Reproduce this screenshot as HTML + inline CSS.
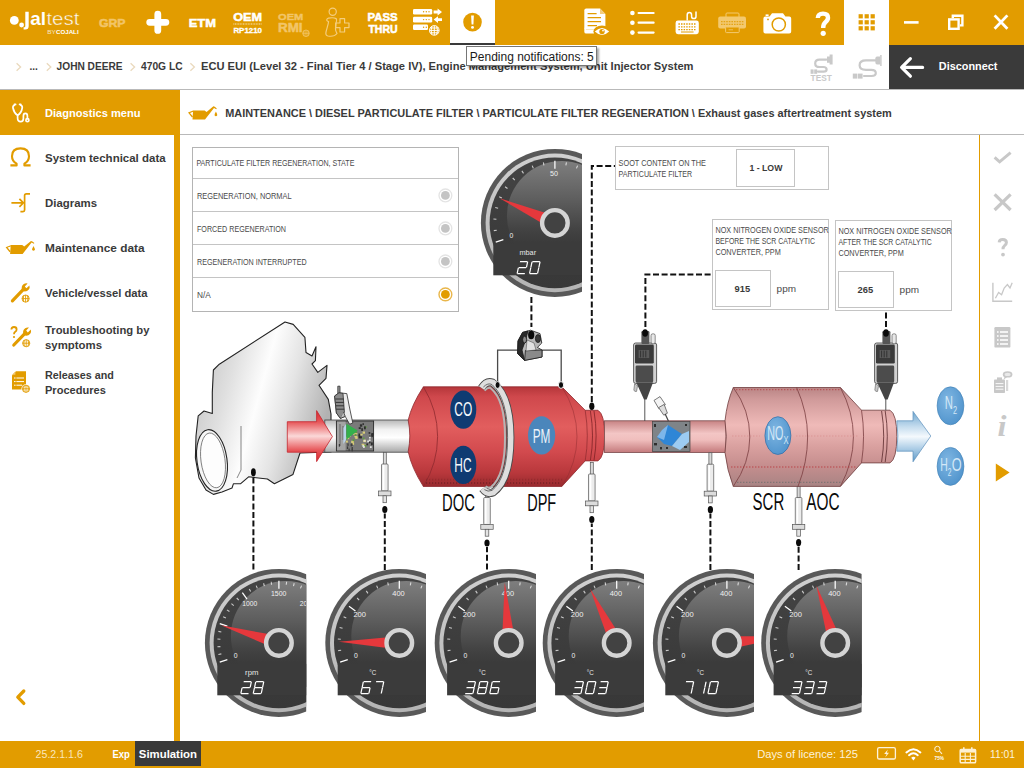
<!DOCTYPE html>
<html>
<head>
<meta charset="utf-8">
<title>Jaltest</title>
<style>
*{box-sizing:border-box;margin:0;padding:0}
html,body{width:1024px;height:768px;overflow:hidden;background:#fff;font-family:"Liberation Sans",sans-serif;color:#3a3a3a}
.abs{position:absolute}
#top{position:absolute;left:0;top:0;width:1024px;height:45px;background:#e29c00}
#crumb{position:absolute;left:0;top:45px;width:1024px;height:44px;background:#fff}
#crumbline{position:absolute;left:0;top:89px;width:1024px;height:1px;background:#b9b9b9}
.bc{position:absolute;top:60px;font-weight:bold;font-size:12px;color:#3a3a3a;white-space:nowrap;line-height:14px;transform-origin:0 50%}
.bcsep{position:absolute;top:61px;width:6px;height:12px}
#disc{position:absolute;left:889px;top:45px;width:135px;height:44px;background:#3a3a3a}
#side{position:absolute;left:0;top:90px;width:174px;height:651px;background:#fff}
#sidebar-o{position:absolute;left:174px;top:90px;width:6px;height:651px;background:#e29c00}
#active{position:absolute;left:0;top:90px;width:180px;height:45px;background:#e29c00}
.mi{position:absolute;left:45px;font-weight:bold;font-size:12px;line-height:15px;color:#3a3a3a;white-space:nowrap;transform-origin:0 50%}
#main{position:absolute;left:180px;top:90px;width:799px;height:651px;background:#fff}
#titleline{position:absolute;left:180px;top:134px;width:844px;height:1px;background:#b9b9b9}
#rline{position:absolute;left:979px;top:135px;width:1px;height:606px;background:#e29c00}
#status{position:absolute;left:0;top:741px;width:1024px;height:27px;background:#e29c00}
.st{position:absolute;top:748px;font-size:12px;line-height:14px;color:#fff;white-space:nowrap;transform-origin:0 50%}
svg{position:absolute;overflow:visible}
</style>
</head>
<body>
<!-- TOP BAR -->
<div id="top"></div>
<div class="abs" style="left:450px;top:0;width:45px;height:45px;background:#fff"></div>
<div class="abs" style="left:450px;top:43px;width:45px;height:2px;background:#3a3a3a"></div>
<div class="abs" style="left:844px;top:0;width:45px;height:45px;background:#fff"></div>
<svg id="topsvg" width="1024" height="45" viewBox="0 0 1024 45" style="left:0;top:0" font-family="Liberation Sans, sans-serif">
<!-- logo -->
<circle cx="14.3" cy="20.4" r="4.4" fill="#fff"/>
<circle cx="21.6" cy="25" r="2.4" fill="#fff"/>
<path d="M25.3 11.8H28.7V26Q28.7 29.6 25.2 29.6H23.6V27.2H24.4Q25.3 27.2 25.3 26Z" fill="#fff"/>
<text x="30.2" y="25.3" font-size="18.4" font-weight="bold" fill="#fff" textLength="15.8" lengthAdjust="spacingAndGlyphs">al</text>
<text x="46.4" y="25.3" font-size="18.4" fill="#fff" textLength="33.2" lengthAdjust="spacingAndGlyphs" stroke="#e29c00" stroke-width="0.45">test</text>
<text x="47.2" y="33.6" font-size="5.6" fill="#fff" opacity="0.75" textLength="8.5" lengthAdjust="spacingAndGlyphs">BY</text>
<text x="56" y="33.6" font-size="5.6" font-weight="bold" fill="#fff" textLength="22.6" lengthAdjust="spacingAndGlyphs">COJALI</text>
<!-- GRP -->
<text x="99" y="26.5" font-size="11.3" font-weight="bold" fill="#f2c568" stroke="#f2c568" stroke-width="0.5" textLength="26.5" lengthAdjust="spacingAndGlyphs">GRP</text>
<!-- plus -->
<path d="M149.7 22.3H165.9M157.8 14.2V30.4" stroke="#fff" stroke-width="6.8" stroke-linecap="round" fill="none"/>
<!-- ETM -->
<text x="188.7" y="26.7" font-size="11.6" font-weight="bold" fill="#fff" stroke="#fff" stroke-width="0.5" textLength="27.3" lengthAdjust="spacingAndGlyphs">ETM</text>
<!-- OEM RP1210 -->
<text x="233.2" y="21.3" font-size="11.6" font-weight="bold" fill="#fff" stroke="#fff" stroke-width="0.5" textLength="28.8" lengthAdjust="spacingAndGlyphs">OEM</text>
<path d="M233.4 24H262" stroke="#fff" stroke-width="1" stroke-dasharray="1 0.6" opacity="0.75"/>
<text x="233.4" y="32.8" font-size="7.8" font-weight="bold" fill="#fff" stroke="#fff" stroke-width="0.3" textLength="28.6" lengthAdjust="spacingAndGlyphs">RP1210</text>
<!-- OEM RMI faded -->
<text x="278" y="19.9" font-size="9.8" font-weight="bold" fill="#f2c568" stroke="#f2c568" stroke-width="0.4" textLength="25.3" lengthAdjust="spacingAndGlyphs">OEM</text>
<text x="278" y="32.2" font-size="12.6" font-weight="bold" fill="#f2c568" stroke="#f2c568" stroke-width="0.5" textLength="24.6" lengthAdjust="spacingAndGlyphs">RMI</text>
<g stroke="#f2c568" stroke-width="0.8" fill="none"><circle cx="306" cy="33.3" r="3.3"/><path d="M302.7 33.3H309.3M306 30V36.6M304.2 30.6Q303.2 33.3 304.2 36M307.8 30.6Q308.8 33.3 307.8 36"/></g>
<!-- person plus faded -->
<g stroke="#f4cd7d" stroke-width="1.2" fill="none" stroke-linejoin="round">
<circle cx="332.7" cy="11.8" r="3.6"/>
<path d="M328.5 18.2C331 17.6 334.5 17.8 336.2 18.6C337 20 336.6 21.5 336.2 22.5L335.5 28.5C335.3 31 336.5 32 337 33.5C335 36 331.5 36.6 328 36C326.2 35.6 325.6 33.8 326 32C326.8 28.5 328.3 24.5 328.6 21.5C327.4 21.5 326.6 20.6 326.8 19.6C327 18.8 327.6 18.4 328.5 18.2Z"/>
<path d="M340 18.6H344.6V23H349V27.6H344.6V32H340V27.6H335.6V23H340Z"/>
</g>
<!-- PASS THRU -->
<text x="367.4" y="21" font-size="10.8" font-weight="bold" fill="#fff" stroke="#fff" stroke-width="0.5" textLength="30.2" lengthAdjust="spacingAndGlyphs">PASS</text>
<text x="368.4" y="32.5" font-size="10.8" font-weight="bold" fill="#fff" stroke="#fff" stroke-width="0.5" textLength="29.2" lengthAdjust="spacingAndGlyphs">THRU</text>
<!-- server -->
<g fill="#fff">
<rect x="413" y="9" width="19.2" height="5.5" rx="1.2"/>
<rect x="413" y="16.8" width="19.2" height="5.7" rx="1.2"/>
<rect x="413" y="24.4" width="15" height="5.5" rx="1.2"/>
<path d="M433.6 10.6H437.6V8.6L442 12L437.6 15.4V13.4H433.6Z"/>
<path d="M442 18.2H438V16.2L433.6 19.6L438 23V21H442Z"/>
</g>
<g fill="#e29c00"><circle cx="423.6" cy="11.8" r="0.7"/><circle cx="426.3" cy="11.8" r="0.7"/><circle cx="429" cy="11.8" r="0.7"/><circle cx="423.6" cy="19.6" r="0.7"/><circle cx="426.3" cy="19.6" r="0.7"/><circle cx="429" cy="19.6" r="0.7"/><circle cx="423.6" cy="27.2" r="0.7"/><circle cx="426.3" cy="27.2" r="0.7"/></g>
<circle cx="434.3" cy="30.4" r="6.2" fill="#e29c00"/>
<g stroke="#fff" stroke-width="1" fill="none"><circle cx="434.3" cy="30.4" r="4.8"/><path d="M429.5 30.4H439.1M434.3 25.6V35.2M432 26.3Q430.2 30.4 432 34.5M436.6 26.3Q438.4 30.4 436.6 34.5M430.2 28H438.4M430.2 32.8H438.4"/></g>
<!-- notification -->
<circle cx="472.5" cy="22.1" r="9.3" fill="#e29c00"/>
<path d="M471.1 15.6H473.9L473.4 24.4H471.6Z" fill="#fff"/><circle cx="472.5" cy="27.4" r="1.45" fill="#fff"/>
<!-- doc-eye -->
<path d="M586.2 8.6H600L605.4 14V29.5H586.2Q584.3 29.5 584.3 27.6V10.5Q584.3 8.6 586.2 8.6Z" fill="#fff"/>
<path d="M600 8.6V14H605.4Z" fill="#f4cd7d"/>
<path d="M587.6 13.6H596.6M587.6 17.6H601M587.6 21.6H601M587.6 25.6H597" stroke="#e29c00" stroke-width="1.3"/>
<path d="M586.2 29.5H597L599 33.6H586.2Q584.3 33.6 584.3 31.7V27.6Z" fill="#fff"/>
<ellipse cx="602" cy="31.6" rx="8.6" ry="6" fill="#e29c00"/>
<path d="M594.8 31.6Q602 24.6 609.2 31.6Q602 38.6 594.8 31.6Z" fill="#fff"/>
<circle cx="602" cy="31.6" r="2.7" fill="#e29c00"/><circle cx="603" cy="30.6" r="0.9" fill="#fff"/>
<!-- list -->
<g fill="#fff"><circle cx="632.4" cy="13" r="2.3"/><circle cx="632.4" cy="22.7" r="2.3"/><circle cx="632.4" cy="32.6" r="2.3"/></g>
<path d="M638.6 13H653.6M638.6 22.7H653.6M638.6 32.6H653.6" stroke="#fff" stroke-width="2.2" stroke-linecap="round"/>
<!-- keyboard -->
<rect x="675.6" y="20.6" width="23.2" height="13.6" rx="2.4" fill="#fff"/>
<path d="M687.2 20.6V15Q687.2 12.6 689.4 12.6Q691.6 12.6 691.6 15V16.4Q691.6 18.6 693.8 18.6Q696 18.6 696 16.4V11.6" stroke="#fff" stroke-width="1.5" fill="none"/>
<g stroke="#e29c00" stroke-width="1.3" stroke-dasharray="1.5 1.1"><path d="M678.4 24H696.4M678.4 26.8H696.4M678.4 29.6H696.4"/></g>
<path d="M681 32H693.6" stroke="#e29c00" stroke-width="1"/>
<!-- printer faded -->
<g fill="#f3c96f">
<rect x="726" y="13" width="13" height="5" rx="1" fill="none" stroke="#f3c96f" stroke-width="1"/>
<rect x="718.2" y="16.6" width="27.8" height="12" rx="2"/>
<rect x="725.6" y="27" width="13.6" height="5.6" rx="0.8" fill="#e29c00" stroke="#f3c96f" stroke-width="1"/>
</g>
<path d="M721 21.6H743.4M721 24.4H743.4" stroke="#e29c00" stroke-width="1.1" stroke-dasharray="1.6 1" opacity="0.8"/>
<path d="M728.6 29.8H733" stroke="#f3c96f" stroke-width="0.8"/>
<!-- camera -->
<path d="M765.4 16.4H769.6L772 13.2H783L785.4 16.4H789.2Q791.2 16.4 791.2 18.4V31.4Q791.2 33.4 789.2 33.4H765.4Q763.4 33.4 763.4 31.4V18.4Q763.4 16.4 765.4 16.4Z" fill="#fff"/>
<circle cx="778.8" cy="24.5" r="6.6" fill="none" stroke="#e29c00" stroke-width="1.5"/>
<circle cx="768" cy="19.4" r="0.9" fill="#e29c00"/>
<path d="M765.6 14.4H768.6V16H765.6Z" fill="#fff"/>
<!-- question -->
<path d="M817.8 18Q818 13.6 823 13.6Q828 13.6 828 17.8Q828 20.2 825.4 22.2Q823.2 24 823.2 28" stroke="#fff" stroke-width="4.4" fill="none"/>
<circle cx="823.2" cy="33.3" r="2.6" fill="#fff"/>
<!-- grid -->
<g fill="#e29c00">
<rect x="858.6" y="14.2" width="4.2" height="4.2"/><rect x="864.6" y="14.2" width="4.2" height="4.2"/><rect x="870.6" y="14.2" width="4.2" height="4.2"/>
<rect x="858.6" y="20.2" width="4.2" height="4.2"/><rect x="864.6" y="20.2" width="4.2" height="4.2"/><rect x="870.6" y="20.2" width="4.2" height="4.2"/>
<rect x="858.6" y="26.2" width="4.2" height="4.2"/><rect x="864.6" y="26.2" width="4.2" height="4.2"/><rect x="870.6" y="26.2" width="4.2" height="4.2"/>
</g>
<!-- window controls -->
<path d="M904 22.4H918.6" stroke="#fff" stroke-width="2.6"/>
<rect x="949.2" y="19.4" width="9.4" height="9.4" fill="none" stroke="#fff" stroke-width="2.4"/>
<path d="M952.8 18.2V15.8H962.4V25.4H960" fill="none" stroke="#fff" stroke-width="2.4"/>
<path d="M994.6 15.4L1007.4 28.8M1007.4 15.4L994.6 28.8" stroke="#fff" stroke-width="2.8"/>
</svg>
<!-- BREADCRUMB -->
<div id="crumb"></div>
<div id="crumbline"></div>
<div id="disc"></div>
<svg width="1024" height="45" viewBox="0 45 1024 45" style="left:0;top:45px" font-family="Liberation Sans, sans-serif">
<g stroke="#ead9bd" stroke-width="1.3" fill="none"><path d="M16.6 63.2L20.6 67L16.6 70.8"/><path d="M46.8 63.2L50.8 67L46.8 70.8"/><path d="M130.6 63.2L134.6 67L130.6 70.8"/><path d="M190.4 63.2L194.4 67L190.4 70.8"/></g>
<text x="29.4" y="70.3" font-size="10.3" font-weight="bold" fill="#3a3a3a" textLength="8.4" lengthAdjust="spacingAndGlyphs" >...</text><text x="56.6" y="70.3" font-size="10.3" font-weight="bold" fill="#3a3a3a" textLength="66" lengthAdjust="spacingAndGlyphs" >JOHN DEERE</text><text x="141" y="70.3" font-size="10.3" font-weight="bold" fill="#3a3a3a" textLength="41.6" lengthAdjust="spacingAndGlyphs" >470G LC</text><text x="201" y="70.3" font-size="10.3" font-weight="bold" fill="#3a3a3a" textLength="492.5" lengthAdjust="spacingAndGlyphs" >ECU EUI (Level 32 - Final Tier 4 / Stage IV), Engine Management System, Unit Injector System</text>
<!-- TEST cable -->
<g stroke="#c9c9c9" fill="none" stroke-width="2.2" stroke-linecap="round">
<path d="M826.4 59.6H819.5Q815.2 59.6 815.2 63.4Q815.2 67 819.5 67H823.2Q826.6 67 826.6 69.5Q826.6 71.6 823.6 71.6H818"/>
<path d="M876.6 60.4H866Q859.6 60.4 859.6 65.2Q859.6 69.8 866 69.8H871.2Q875.8 69.8 875.8 73Q875.8 76 871.6 76H864"/>
</g>
<g fill="#c9c9c9">
<path d="M827 56.4H829.6V54.6H832.6V64.6H829.6V62.8H827Z"/>
<rect x="810.6" y="69.4" width="3" height="4.4"/><rect x="814.2" y="69.4" width="3" height="4.4"/>
<path d="M877 56.6H880.2V64.4H877Q875.4 64.4 875.4 62.8V58.2Q875.4 56.6 877 56.6Z"/><rect x="880.2" y="55" width="1.4" height="11"/>
<rect x="852.8" y="73.6" width="4.6" height="5"/><rect x="858" y="73.6" width="4.6" height="5"/>
</g>
<text x="810.6" y="80.8" font-size="8.6" font-weight="bold" fill="#c9c9c9" textLength="21.2" lengthAdjust="spacingAndGlyphs" >TEST</text>
<!-- disconnect -->
<path d="M902 67.4H922.6M910.4 58.6L901.6 67.4L910.4 76.2" stroke="#fff" stroke-width="3.2" fill="none" stroke-linecap="round" stroke-linejoin="round"/>
<text x="938.8" y="70.3" font-size="10.4" font-weight="bold" fill="#fff" textLength="58.6" lengthAdjust="spacingAndGlyphs" >Disconnect</text>
</svg>
<!-- tooltip -->
<div class="abs" style="left:466px;top:46px;width:131px;height:20px;background:#fff;border:1px solid #767676;box-shadow:2px 2px 2px rgba(0,0,0,0.35)"></div>
<svg width="140" height="24" viewBox="466 46 140 24" style="left:466px;top:46px" font-family="Liberation Sans, sans-serif"><text x="469.8" y="60.6" font-size="12" font-weight="normal" fill="#1a1a1a" textLength="124" lengthAdjust="spacingAndGlyphs" >Pending notifications: 5</text></svg>
<!-- SIDEBAR -->
<div id="side"></div>
<div id="sidebar-o"></div>
<div id="active"></div>
<svg width="180" height="651" viewBox="0 90 180 651" style="left:0;top:90px" font-family="Liberation Sans, sans-serif">
<text x="45" y="117" font-size="11.2" font-weight="bold" fill="#fff" textLength="95.6" lengthAdjust="spacingAndGlyphs" >Diagnostics menu</text><text x="45" y="162" font-size="11.2" font-weight="bold" fill="#3a3a3a" textLength="120.6" lengthAdjust="spacingAndGlyphs" >System technical data</text><text x="45" y="207" font-size="11.2" font-weight="bold" fill="#3a3a3a" textLength="52" lengthAdjust="spacingAndGlyphs" >Diagrams</text><text x="45" y="252" font-size="11.2" font-weight="bold" fill="#3a3a3a" textLength="99.6" lengthAdjust="spacingAndGlyphs" >Maintenance data</text><text x="45" y="297" font-size="11.2" font-weight="bold" fill="#3a3a3a" textLength="102.6" lengthAdjust="spacingAndGlyphs" >Vehicle/vessel data</text><text x="45" y="334.4" font-size="11.2" font-weight="bold" fill="#3a3a3a" textLength="104.4" lengthAdjust="spacingAndGlyphs" >Troubleshooting by</text><text x="45" y="349" font-size="11.2" font-weight="bold" fill="#3a3a3a" textLength="57" lengthAdjust="spacingAndGlyphs" >symptoms</text><text x="45" y="379" font-size="11.2" font-weight="bold" fill="#3a3a3a" textLength="68.8" lengthAdjust="spacingAndGlyphs" >Releases and</text><text x="45" y="394" font-size="11.2" font-weight="bold" fill="#3a3a3a" textLength="60.8" lengthAdjust="spacingAndGlyphs" >Procedures</text>
<!-- stethoscope -->
<g stroke="#fff" stroke-width="1.7" fill="none" stroke-linecap="round">
<path d="M14.4 105.2Q12.6 105.8 13 108Q14 113 17.6 115.4Q21.4 113 22.2 108Q22.6 105.8 20.8 105.2"/>
<path d="M17.6 115.4V118Q17.6 121.6 20.6 121.6Q23.4 121.6 23.4 118.4V116Q23.4 113.4 25.4 113.4Q27.4 113.4 27.4 116V118.6"/>
<circle cx="27.4" cy="120.2" r="1.5"/><path d="M15.6 104.4H14.4M19.6 104.4H20.8"/>
</g>
<!-- omega -->
<path d="M10.4 165.4H16.6V163.6Q12 161.2 12 156.2Q12 148.4 20.5 148.4Q29 148.4 29 156.2Q29 161.2 24.4 163.6V165.4H30.6" stroke="#e29c00" stroke-width="2.1" fill="none" stroke-linejoin="round"/>
<!-- diagrams -->
<g stroke="#e29c00" stroke-width="1.7" fill="none"><path d="M11.4 202.8H23M19.4 198.8L23.4 202.8L19.4 206.8"/><path d="M30 193.8H26.4Q24.6 193.8 24.6 195.6V210Q24.6 211.6 23 211.6H20.4"/></g>
<!-- oil can -->
<g id="oil" fill="#e29c00"><path d="M10.7 245H22.2L24.2 246.6L31 240.9L32.4 241.4L34.4 243L33.8 243.8L31.6 242.6L22.6 254H10.1Z"/><path d="M10.8 245.2L5.6 247.2L9.6 252.2L10.6 251.2L7.6 247.6L10.8 246.4Z"/><path d="M33.5 246Q35.2 249 34.8 250Q33.5 251.6 32.2 250Q31.8 249 33.5 246Z"/></g>
<!-- wrench -->
<g id="wr"><path d="M12.4 300.8L23.6 289.2" stroke="#e29c00" stroke-width="3.2" stroke-linecap="round"/><path d="M22.2 290.4Q20.6 286.4 23.8 284Q25.6 282.8 27.6 283.4L24.8 286.4L26.4 288.2L29.4 285.4Q30.2 287.6 28.8 289.6Q26.4 292.4 22.6 291Z" fill="#e29c00"/></g>
<g id="gl"><circle cx="25.6" cy="298.6" r="4.6" fill="#fff"/><g stroke="#e29c00" stroke-width="0.9" fill="none"><circle cx="25.6" cy="298.6" r="3.6"/><path d="M22 298.6H29.2M25.6 295V302.2M23.8 295.6Q22.6 298.6 23.8 301.6M27.4 295.6Q28.6 298.6 27.4 301.6"/></g></g>
<!-- ? wrench -->
<use href="#wr" transform="translate(1.4 44.2)"/>
<use href="#gl" transform="translate(0.6 44.6)"/>
<path d="M11.4 329.6Q11.4 327 14 327Q16.6 327 16.6 329.4Q16.6 330.8 15.2 331.8Q14 332.6 14 334.2" stroke="#e29c00" stroke-width="1.8" fill="none"/><circle cx="14" cy="337" r="1.1" fill="#e29c00"/>
<!-- doc globe -->
<path d="M16 371.2H26V389.6H12V375.2Z" fill="#e29c00"/><path d="M15.4 371.6V374.8H12.2Z" fill="#f0c773"/>
<path d="M14 378H24M14 381.6H24M14 385.2H22" stroke="#fff" stroke-width="1" stroke-dasharray="1.6 0.8 20"/>
<use href="#gl" transform="translate(0.4 90.2)"/>
<!-- collapse chevron -->
<path d="M23.8 691L17.8 697.2L23.8 703.4" stroke="#e29c00" stroke-width="3.3" fill="none" stroke-linecap="round" stroke-linejoin="round"/>
</svg>
<!-- MAIN -->
<div id="main"></div>
<div id="titleline"></div>
<div id="rline"></div>
<!--DIAGRAM-START-->
<svg id="diagram" width="1024" height="768" viewBox="0 0 1024 768" style="left:0;top:0" font-family="Liberation Sans, sans-serif">
<defs>
<linearGradient id="gEng" x1="0" y1="0.1" x2="1" y2="0.45"><stop offset="0" stop-color="#bfbfbf"/><stop offset="0.3" stop-color="#e0e0e0"/><stop offset="0.52" stop-color="#fdfdfd"/><stop offset="0.72" stop-color="#e4e4e4"/><stop offset="1" stop-color="#b2b2b2"/></linearGradient>
<linearGradient id="gRedArrow" x1="0" y1="0" x2="0" y2="1"><stop offset="0" stop-color="#d9262e"/><stop offset="0.22" stop-color="#e75558"/><stop offset="0.5" stop-color="#fbd8d8"/><stop offset="0.78" stop-color="#e75558"/><stop offset="1" stop-color="#d9262e"/></linearGradient>
<linearGradient id="gPipe1" x1="0" y1="0" x2="0" y2="1"><stop offset="0" stop-color="#b8b8b8"/><stop offset="0.3" stop-color="#f2f2f2"/><stop offset="0.55" stop-color="#ffffff"/><stop offset="1" stop-color="#a8a8a8"/></linearGradient>
<linearGradient id="gRed" x1="0" y1="0" x2="0" y2="1"><stop offset="0" stop-color="#b5363a"/><stop offset="0.1" stop-color="#cf484c"/><stop offset="0.4" stop-color="#e25e5e"/><stop offset="0.65" stop-color="#d24a4e"/><stop offset="0.86" stop-color="#b9383c"/><stop offset="1" stop-color="#982a2e"/></linearGradient>
<linearGradient id="gPink" x1="0" y1="0" x2="0" y2="1"><stop offset="0" stop-color="#b98585"/><stop offset="0.12" stop-color="#d09a9a"/><stop offset="0.38" stop-color="#efbab8"/><stop offset="0.6" stop-color="#d9a09f"/><stop offset="0.8" stop-color="#c48d8d"/><stop offset="1" stop-color="#a88484"/></linearGradient>
<linearGradient id="gPipe2" x1="0" y1="0" x2="0" y2="1"><stop offset="0" stop-color="#c88384"/><stop offset="0.4" stop-color="#f3c6c5"/><stop offset="0.6" stop-color="#f0bebd"/><stop offset="1" stop-color="#c47a7c"/></linearGradient>
<linearGradient id="gBlueArrow" x1="0" y1="0" x2="0" y2="1"><stop offset="0" stop-color="#6ea6cf"/><stop offset="0.3" stop-color="#c4dcee"/><stop offset="0.5" stop-color="#f4f9fd"/><stop offset="0.75" stop-color="#a9cbe5"/><stop offset="1" stop-color="#5f9ac8"/></linearGradient>
<linearGradient id="gFace" x1="0" y1="0" x2="0" y2="1"><stop offset="0" stop-color="#444444"/><stop offset="0.6" stop-color="#3b3b3b"/><stop offset="1" stop-color="#383838"/></linearGradient>
<linearGradient id="gGlass" x1="0" y1="0" x2="0" y2="1"><stop offset="0" stop-color="#7e7e7e"/><stop offset="0.35" stop-color="#5e5e5e"/><stop offset="0.62" stop-color="#434343"/><stop offset="0.74" stop-color="#3b3b3b"/><stop offset="1" stop-color="#3b3b3b"/></linearGradient>
<linearGradient id="gRing" x1="0" y1="0" x2="0" y2="1"><stop offset="0" stop-color="#d0d0d0"/><stop offset="1" stop-color="#b4b4b4"/></linearGradient>
<radialGradient id="gBall" cx="0.4" cy="0.35" r="0.7"><stop offset="0" stop-color="#7fb6e2"/><stop offset="1" stop-color="#4f93cc"/></radialGradient>

<g id="gbase">
<circle r="74" fill="#595959"/>
<circle r="69.3" fill="url(#gRing)"/>
<circle r="65.3" fill="url(#gFace)"/>
<circle cx="7" cy="-7" r="55" fill="url(#gGlass)"/>
<rect x="-61.6" y="21" width="140" height="31.4" fill="#3b3b3b"/>
</g>
<g id="ghub"><circle r="12.8" fill="#424242" stroke="#d4d4d4" stroke-width="4.4"/></g>
<path id="needle" d="M60.5 0L14 -5.2L14 5.2Z" fill="#e5383c"/>

<g id="tkT" stroke="#fff" stroke-linecap="butt"><path d="M-51.55 16.75L-59.16 19.22" stroke-width="1.25" opacity="1"/><path d="M-58.14 7.34L-61.11 7.72" stroke-width="1.1" opacity="0.72"/><path d="M-58.48 -3.68L-61.48 -3.87" stroke-width="1.1" opacity="0.72"/><path d="M-56.76 -14.57L-59.66 -15.32" stroke-width="1.1" opacity="0.72"/><path d="M-53.02 -24.95L-55.74 -26.23" stroke-width="1.1" opacity="0.72"/><path d="M-43.85 -31.86L-50.32 -36.56" stroke-width="1.25" opacity="1"/><path d="M-40.11 -42.72L-42.17 -44.90" stroke-width="1.1" opacity="0.72"/><path d="M-31.40 -49.48L-33.01 -52.01" stroke-width="1.1" opacity="0.72"/><path d="M-21.57 -54.48L-22.68 -57.27" stroke-width="1.1" opacity="0.72"/><path d="M-10.98 -57.56L-11.54 -60.51" stroke-width="1.1" opacity="0.72"/><path d="M-0.00 -54.20L-0.00 -62.20" stroke-width="1.25" opacity="1"/><path d="M10.98 -57.56L11.54 -60.51" stroke-width="1.1" opacity="0.72"/><path d="M21.57 -54.48L22.68 -57.27" stroke-width="1.1" opacity="0.72"/><path d="M31.40 -49.48L33.01 -52.01" stroke-width="1.1" opacity="0.72"/><path d="M40.11 -42.72L42.17 -44.90" stroke-width="1.1" opacity="0.72"/><path d="M43.85 -31.86L50.32 -36.56" stroke-width="1.25" opacity="1"/><path d="M53.02 -24.95L55.74 -26.23" stroke-width="1.1" opacity="0.72"/></g>
<g id="tkR" stroke="#fff" stroke-linecap="butt"><path d="M-51.55 16.75L-59.16 19.22" stroke-width="1.25" opacity="1"/><path d="M-57.56 10.98L-60.51 11.54" stroke-width="1.1" opacity="0.72"/><path d="M-58.48 3.68L-61.48 3.87" stroke-width="1.1" opacity="0.72"/><path d="M-58.48 -3.68L-61.48 -3.87" stroke-width="1.1" opacity="0.72"/><path d="M-57.56 -10.98L-60.51 -11.54" stroke-width="1.1" opacity="0.72"/><path d="M-51.55 -16.75L-59.16 -19.22" stroke-width="1.25" opacity="1"/><path d="M-53.02 -24.95L-55.74 -26.23" stroke-width="1.1" opacity="0.72"/><path d="M-49.48 -31.40L-52.01 -33.01" stroke-width="1.1" opacity="0.72"/><path d="M-45.15 -37.35L-47.46 -39.27" stroke-width="1.1" opacity="0.72"/><path d="M-40.11 -42.72L-42.17 -44.90" stroke-width="1.1" opacity="0.72"/><path d="M-31.86 -43.85L-36.56 -50.32" stroke-width="1.25" opacity="1"/><path d="M-28.23 -51.35L-29.68 -53.98" stroke-width="1.1" opacity="0.72"/><path d="M-21.57 -54.48L-22.68 -57.27" stroke-width="1.1" opacity="0.72"/><path d="M-14.57 -56.76L-15.32 -59.66" stroke-width="1.1" opacity="0.72"/><path d="M-7.34 -58.14L-7.72 -61.11" stroke-width="1.1" opacity="0.72"/><path d="M-0.00 -54.20L-0.00 -62.20" stroke-width="1.25" opacity="1"/><path d="M7.34 -58.14L7.72 -61.11" stroke-width="1.1" opacity="0.72"/><path d="M14.57 -56.76L15.32 -59.66" stroke-width="1.1" opacity="0.72"/><path d="M21.57 -54.48L22.68 -57.27" stroke-width="1.1" opacity="0.72"/><path d="M28.23 -51.35L29.68 -53.98" stroke-width="1.1" opacity="0.72"/><path d="M31.86 -43.85L36.56 -50.32" stroke-width="1.25" opacity="1"/><path d="M40.11 -42.72L42.17 -44.90" stroke-width="1.1" opacity="0.72"/><path d="M45.15 -37.35L47.46 -39.27" stroke-width="1.1" opacity="0.72"/></g>
<g id="tkM" stroke="#fff" stroke-linecap="butt"><path d="M-51.55 16.75L-59.16 19.22" stroke-width="1.25" opacity="1"/><path d="M-58.14 7.34L-61.11 7.72" stroke-width="1.1" opacity="0.72"/><path d="M-58.48 -3.68L-61.48 -3.87" stroke-width="1.1" opacity="0.72"/><path d="M-56.76 -14.57L-59.66 -15.32" stroke-width="1.1" opacity="0.72"/><path d="M-53.02 -24.95L-55.74 -26.23" stroke-width="1.1" opacity="0.72"/><path d="M-47.41 -34.44L-49.84 -36.21" stroke-width="1.1" opacity="0.72"/><path d="M-40.11 -42.72L-42.17 -44.90" stroke-width="1.1" opacity="0.72"/><path d="M-31.40 -49.48L-33.01 -52.01" stroke-width="1.1" opacity="0.72"/><path d="M-21.57 -54.48L-22.68 -57.27" stroke-width="1.1" opacity="0.72"/><path d="M-10.98 -57.56L-11.54 -60.51" stroke-width="1.1" opacity="0.72"/><path d="M-0.00 -54.20L-0.00 -62.20" stroke-width="1.25" opacity="1"/><path d="M10.98 -57.56L11.54 -60.51" stroke-width="1.1" opacity="0.72"/><path d="M21.57 -54.48L22.68 -57.27" stroke-width="1.1" opacity="0.72"/><path d="M31.40 -49.48L33.01 -52.01" stroke-width="1.1" opacity="0.72"/><path d="M40.11 -42.72L42.17 -44.90" stroke-width="1.1" opacity="0.72"/><path d="M47.41 -34.44L49.84 -36.21" stroke-width="1.1" opacity="0.72"/><path d="M53.02 -24.95L55.74 -26.23" stroke-width="1.1" opacity="0.72"/></g>
<path id="d0" d="M0.9 0.0L7.1 0.0M8.0 0.9L8.0 5.4M8.0 6.8L8.0 11.3M0.9 12.2L7.1 12.2M0.0 6.8L0.0 11.3M0.0 0.9L0.0 5.4"/>
<path id="d1" d="M8.0 0.9L8.0 5.4M8.0 6.8L8.0 11.3"/>
<path id="d2" d="M0.9 0.0L7.1 0.0M8.0 0.9L8.0 5.4M0.9 6.1L7.1 6.1M0.0 6.8L0.0 11.3M0.9 12.2L7.1 12.2"/>
<path id="d3" d="M0.9 0.0L7.1 0.0M8.0 0.9L8.0 5.4M0.9 6.1L7.1 6.1M8.0 6.8L8.0 11.3M0.9 12.2L7.1 12.2"/>
<path id="d4" d="M0.0 0.9L0.0 5.4M0.9 6.1L7.1 6.1M8.0 0.9L8.0 5.4M8.0 6.8L8.0 11.3"/>
<path id="d5" d="M0.9 0.0L7.1 0.0M0.0 0.9L0.0 5.4M0.9 6.1L7.1 6.1M8.0 6.8L8.0 11.3M0.9 12.2L7.1 12.2"/>
<path id="d6" d="M0.9 0.0L7.1 0.0M0.0 0.9L0.0 5.4M0.9 6.1L7.1 6.1M0.0 6.8L0.0 11.3M0.9 12.2L7.1 12.2M8.0 6.8L8.0 11.3"/>
<path id="d7" d="M0.9 0.0L7.1 0.0M8.0 0.9L8.0 5.4M8.0 6.8L8.0 11.3"/>
<path id="d8" d="M0.9 0.0L7.1 0.0M8.0 0.9L8.0 5.4M8.0 6.8L8.0 11.3M0.9 12.2L7.1 12.2M0.0 6.8L0.0 11.3M0.0 0.9L0.0 5.4M0.9 6.1L7.1 6.1"/>
<path id="d9" d="M0.9 0.0L7.1 0.0M8.0 0.9L8.0 5.4M8.0 6.8L8.0 11.3M0.9 12.2L7.1 12.2M0.0 0.9L0.0 5.4M0.9 6.1L7.1 6.1"/>
<g id="probe" stroke="#555" stroke-width="0.7" fill="#ececec">
<rect x="-1.5" y="0" width="3" height="12" fill="#d8d8d8"/>
<rect x="-3.3" y="11.5" width="6.6" height="27" rx="1"/>
<path d="M-1.2 12.5V37.5" stroke="#fff" stroke-width="1.6" fill="none"/>
<rect x="-6.2" y="38.5" width="12.4" height="4.8" fill="#dcdcdc"/>
<rect x="-1.8" y="43.3" width="3.6" height="6.9" fill="#e4e4e4"/>
</g>
</defs>
<!-- ENGINE -->
<g stroke="#222" stroke-width="1.1" stroke-linejoin="round">
<path d="M285 322L293.2 324.4L304.9 337.3L306 352.5L312 356L316 346.7L315.4 360.7L312 364L317.8 372.4L327 365.4L326 378.3L319 385.3L328.3 399.4L331 414L331 452L300 453L293 474.4L274.4 483.8L267.4 479L248.6 476.8L240.4 483.8L233.4 483.8L232 488L222 492L213.4 494.4L206 490L199 478L195.4 458L196 436L198.2 415.8L204 411L212.3 413.5L212.3 392.4L213.4 370L219.3 364.2Z" fill="url(#gEng)"/>
<ellipse cx="212" cy="460.4" rx="15" ry="31" fill="#f6f6f6" transform="rotate(-8 212 460.4)"/>
<ellipse cx="213" cy="460.4" rx="12" ry="27.6" fill="#fdfdfd" stroke="#555" stroke-width="0.7" transform="rotate(-8 213 460.4)"/>
<path d="M241 426V470L237 478" fill="none" stroke="#555" stroke-width="0.7"/>
</g>
<!-- probes behind bodies -->
<use href="#probe" transform="translate(487 486)"/>
<use href="#probe" transform="translate(591.8 462.5)"/>
<use href="#probe" transform="translate(798.6 486)"/>
<!-- PIPE 1 -->
<rect x="324.8" y="420" width="88" height="32.2" fill="url(#gPipe1)" stroke="#444" stroke-width="0.8"/>
<!-- mixer 1 -->
<rect x="336.4" y="421" width="37.2" height="30" fill="#7a7a7a" stroke="#2a2a2a" stroke-width="0.9"/>
<rect x="337" y="421.6" width="8.6" height="28.8" fill="#a4a4a4"/>
<path d="M340 424V446M343 426V440" stroke="#555" stroke-width="0.8"/>
<path d="M343.4 428L346 424V440L343.4 444Z" fill="#b9d4ea"/>
<rect x="349.7" y="431.8" width="2.2" height="1.6" fill="#d8cd78"/><rect x="346.3" y="436.8" width="2.9" height="2.4" fill="#d8cd78"/><rect x="360.3" y="433.8" width="2.4" height="1.7" fill="#d8cd78"/><rect x="348.5" y="431.8" width="1.9" height="2.5" fill="#d8cd78"/><rect x="361.6" y="443.7" width="2.7" height="1.6" fill="#d8cd78"/><rect x="351.2" y="440.7" width="2.6" height="2.4" fill="#d8cd78"/><rect x="362.6" y="431.5" width="2.4" height="2.2" fill="#d8cd78"/><rect x="355.1" y="433.0" width="2.3" height="1.5" fill="#d8cd78"/><rect x="363.7" y="444.7" width="2.4" height="1.8" fill="#d8cd78"/><rect x="363.2" y="439.7" width="2.8" height="2.4" fill="#d8cd78"/><rect x="355.2" y="437.0" width="2.4" height="1.9" fill="#d8cd78"/><rect x="348.2" y="435.2" width="2.7" height="1.5" fill="#d8cd78"/><rect x="345.9" y="440.6" width="2.0" height="2.0" fill="#d8cd78"/><rect x="354.4" y="435.8" width="3.0" height="1.6" fill="#d8cd78"/><rect x="353.3" y="433.4" width="2.5" height="1.7" fill="#d8cd78"/><rect x="352.1" y="442.7" width="2.0" height="2.1" fill="#d8cd78"/><rect x="364.7" y="426.2" width="1.8" height="1.8" fill="#5e9b3c"/><rect x="352.9" y="429.0" width="1.8" height="1.8" fill="#5e9b3c"/><rect x="362.7" y="437.5" width="1.8" height="1.8" fill="#5e9b3c"/><rect x="355.3" y="431.3" width="1.8" height="1.8" fill="#5e9b3c"/><rect x="354.5" y="434.1" width="1.8" height="1.8" fill="#5e9b3c"/><rect x="352.6" y="439.3" width="1.8" height="1.8" fill="#5e9b3c"/><rect x="364.5" y="445.0" width="1.8" height="1.8" fill="#5e9b3c"/><rect x="362.3" y="445.1" width="1.8" height="1.8" fill="#5e9b3c"/><rect x="352.3" y="430.4" width="1.8" height="1.8" fill="#5e9b3c"/><rect x="371.0" y="442.4" width="1.8" height="2.9" fill="#2e2e2e"/><rect x="366.4" y="443.4" width="1.7" height="1.9" fill="#2e2e2e"/><rect x="364.0" y="426.4" width="1.8" height="2.9" fill="#2e2e2e"/><rect x="362.5" y="423.2" width="1.4" height="1.8" fill="#2e2e2e"/><rect x="368.6" y="432.1" width="1.7" height="1.7" fill="#2e2e2e"/><rect x="371.3" y="433.6" width="1.6" height="1.7" fill="#2e2e2e"/><rect x="358.7" y="427.2" width="2.1" height="1.8" fill="#2e2e2e"/><rect x="358.6" y="435.3" width="1.6" height="3.0" fill="#2e2e2e"/><rect x="359.7" y="436.2" width="2.2" height="2.2" fill="#2e2e2e"/><rect x="371.3" y="434.9" width="1.6" height="2.2" fill="#2e2e2e"/><rect x="358.5" y="433.5" width="1.6" height="2.8" fill="#2e2e2e"/><rect x="369.2" y="435.5" width="1.4" height="2.0" fill="#2e2e2e"/><rect x="361.3" y="428.2" width="1.6" height="2.8" fill="#2e2e2e"/><rect x="359.9" y="424.3" width="2.3" height="2.4" fill="#2e2e2e"/><rect x="371.4" y="433.1" width="2.3" height="2.5" fill="#2e2e2e"/><rect x="368.7" y="441.6" width="1.9" height="1.7" fill="#2e2e2e"/><rect x="362.3" y="445.0" width="1.8" height="1.8" fill="#e2e2e2"/><rect x="369.9" y="446.2" width="1.8" height="1.8" fill="#e2e2e2"/><rect x="363.7" y="439.8" width="1.8" height="1.8" fill="#e2e2e2"/><rect x="368.8" y="439.4" width="1.8" height="1.8" fill="#e2e2e2"/><rect x="369.0" y="436.7" width="1.8" height="1.8" fill="#e2e2e2"/><rect x="367.2" y="440.5" width="1.8" height="1.8" fill="#e2e2e2"/><rect x="363.0" y="446.1" width="1.8" height="1.8" fill="#e2e2e2"/><rect x="351.4" y="443.4" width="1.2" height="2.6" fill="#3a3a3a"/><rect x="351.6" y="448.8" width="1.2" height="2.6" fill="#3a3a3a"/><rect x="347.4" y="443.3" width="1.2" height="2.6" fill="#3a3a3a"/><rect x="350.6" y="443.8" width="1.2" height="2.6" fill="#3a3a3a"/><rect x="351.6" y="447.0" width="1.2" height="2.6" fill="#3a3a3a"/><rect x="338.8" y="444.0" width="1.2" height="2.6" fill="#3a3a3a"/><rect x="346.9" y="446.4" width="1.2" height="2.6" fill="#3a3a3a"/><rect x="348.5" y="448.6" width="1.2" height="2.6" fill="#3a3a3a"/>
<path d="M346.4 423.8L357.6 430.4L346.4 439.8Z" fill="#33b04c"/>
<!-- injector 1 -->
<g stroke="#2e2e2e" stroke-width="0.8" stroke-linejoin="round">
<path d="M337.8 386.2H340V393.6H337.8Z" fill="#999"/>
<path d="M334.6 396L339 392.8L346.8 393.6L349.8 409L352.8 423L349.6 424.2L345.2 416.4L340.4 418.4L336.4 413Z" fill="#ececec"/>
<path d="M334.6 396L339 392.8L343 393.4L344.4 412L340.4 418.4L336.4 413Z" fill="#8c8c8c"/>
<path d="M335.4 399H343.6M335.8 402.4H343.8M336 405.8H344M336.2 409.2H344.2" stroke="#2a2a2a" stroke-width="0.9" fill="none"/>
<path d="M340.4 418.4L345.2 416.4L343.6 412" fill="#bdbdbd"/>
</g>
<!-- RED ARROW -->
<path d="M287.3 421.7H316.6V410.6L332.4 436.6L316.6 461.6V452.2H287.3Z" fill="url(#gRedArrow)" stroke="#c4262e" stroke-width="0.8"/>
<!-- DOC / DPF -->
<path d="M408.2 420Q411.6 405 423.4 386.8H561.8L585.2 410.3H598Q604.6 414 604.6 435.6Q604.6 457 598 460.9H585.2L561.8 486.5H423.4Q411.6 468 408.2 451.6Q411.4 436 408.2 420Z" fill="url(#gRed)" stroke="#8e2a2e" stroke-width="0.8"/>
<path d="M423.4 386.8Q437.6 410 437.6 436.6Q437.6 463 423.4 486.5" fill="none" stroke="#8e2a2e" stroke-width="0.8"/>
<path d="M561.8 386.8Q577 410 577 436.6Q577 463 561.8 486.5" fill="none" stroke="#8e2a2e" stroke-width="0.7" opacity="0.7"/>
<path d="M585.2 410.3Q589.4 436 585.2 460.9" fill="none" stroke="#8e2a2e" stroke-width="0.7"/>
<path d="M590.4 411Q594.6 436 590.4 460.4M594 411Q598.2 436 594 460.4" fill="none" stroke="#7d2226" stroke-width="0.8"/>
<g fill="none" stroke-dasharray="1.2 1.8" stroke-width="1.6">
<path d="M426 483H560" stroke="#5a1a1e" opacity="0.55"/>
<path d="M426 479.6H563" stroke="#7a2226" opacity="0.4"/>
</g>
<!-- clamp ring -->
<path d="M481.6 388Q486.4 380.4 492.6 382.6Q510.4 396 510.4 437.4Q510.4 480 493 492.4Q487 494.6 482.6 488.6" fill="none" stroke="#4a4a4a" stroke-width="8"/>
<path d="M481.6 388Q486.4 380.4 492.6 382.6Q510.4 396 510.4 437.4Q510.4 480 493 492.4Q487 494.6 482.6 488.6" fill="none" stroke="#dedede" stroke-width="6.2"/>
<path d="M483.4 387Q488 382.4 492 384.6Q507.6 398 507.6 437.4Q507.6 478 492 490.4Q488 492.2 484.4 489.6" fill="none" stroke="#6a6a6a" stroke-width="1"/>
<path d="M484.6 390.6Q488.6 386.6 491 388.4Q505 400 505 437.4Q505 476 491 487Q488.6 488.6 485.6 486.4" fill="none" stroke="#b5b5b5" stroke-width="2"/>
<!-- balls -->
<g font-size="14" fill="#fff" text-anchor="middle">
<ellipse cx="463.3" cy="409.6" rx="13" ry="19.2" fill="#0f3b72"/>
<ellipse cx="463.3" cy="464.9" rx="13" ry="19.2" fill="#0f3b72"/>
<ellipse cx="541.6" cy="435.4" rx="13.6" ry="19.2" fill="#4b86bb"/>
</g>
<!-- PIPE 2 -->
<rect x="604.4" y="420.8" width="121.6" height="31.7" fill="url(#gPipe2)" stroke="#7a4a4c" stroke-width="0.8"/>
<!-- mixer 2 -->
<rect x="652.4" y="421.6" width="37.6" height="30" fill="#7f8488" stroke="#444" stroke-width="0.7"/>
<path d="M657 437L668 425L682 434L672 446L664 444Z" fill="#2f86d6"/>
<path d="M672 446L682 434L689 431V442L680 450Z" fill="#9ccbf2"/>
<path d="M657 437L662 430L668 425L664 440Z" fill="#7db6ea"/>
<g fill="#2e2e2e"><rect x="654" y="424" width="2" height="3"/><rect x="654" y="443" width="3" height="2.4"/><rect x="660" y="447" width="2" height="2.4"/><rect x="685" y="424" width="2" height="2"/><rect x="684" y="446" width="3" height="2"/><rect x="666" y="447" width="2" height="2"/></g>
<!-- SCR / AOC -->
<path d="M725 420.8Q727 402 733.3 387.5H840.4L861.5 410.2H890Q896.8 414 896.8 436.4Q896.8 459 890 462.9H861.5L840.4 486.4H733.3Q727 470 725 452.5Q727.6 436 725 420.8Z" fill="url(#gPink)" stroke="#6e3c3e" stroke-width="0.8"/>
<g fill="none" stroke="#7a3e40" stroke-width="0.8">
<path d="M733.3 387.5Q749.8 410 749.8 437Q749.8 463 733.3 486.4"/>
<path d="M796.6 387.5Q807.6 412 807.6 437Q807.6 462 798 486.4"/>
<path d="M840.4 387.5Q853.4 412 853.4 437Q853.4 462 840.4 486.4"/>
<path d="M861.5 410.2Q865.6 436 861.5 462.9"/>
<path d="M881.6 411Q885.8 436 881.6 462M885.2 411Q889.4 436 885.2 462" stroke="#5a2a2c"/>
</g>
<g fill="none" stroke-dasharray="1.4 1.6" stroke-width="1.1">
<path d="M736 389.6H840" stroke="#b8484c" opacity="0.8"/>
<path d="M731 467H856" stroke="#b8383e" opacity="0.85"/>
<path d="M737 482.4H842" stroke="#6e6e6e" opacity="0.7"/>
<path d="M732 436H760M796 436H858" stroke="#d88888" opacity="0.6"/>
</g>
<ellipse cx="777.9" cy="435.6" rx="13" ry="18.9" fill="url(#gBall)" stroke="#2f6da6" stroke-width="0.7"/>
<!-- BLUE ARROW -->
<path d="M896.8 420.8H913V411.4L930.8 436L913 461.8V451.2H896.8Q899 436 896.8 420.8Z" fill="url(#gBlueArrow)" stroke="#5b8fbb" stroke-width="0.7"/>
<ellipse cx="950.5" cy="405.8" rx="13.4" ry="19" fill="url(#gBall)" stroke="#3f7fb4" stroke-width="0.6"/>
<ellipse cx="950.5" cy="466.4" rx="13.4" ry="19" fill="url(#gBall)" stroke="#3f7fb4" stroke-width="0.6"/>
<!-- sensor probes -->

<use href="#probe" transform="translate(384.8 452.5)"/>
<use href="#probe" transform="translate(710.4 452.7)"/>
<!-- dP sensor with tubes -->
<path d="M497.6 384V350.2H518M542 350.2H561.2V384" fill="none" stroke="#4a4a4a" stroke-width="1.3"/>
<g stroke="#1a1a1a" stroke-width="0.8"><path d="M518 341L522.6 332.4L530.6 330.2L540 333.6L541.8 343L537.4 347.4L542 350V357L524.6 360.4L517.6 353.6Z" fill="#b9b9b9"/><path d="M518 341L522.6 332.4L528 331L525.4 340.6L522 350L524.6 360.4L517.6 353.6Z" fill="#2a2a2a"/><path d="M525.4 350.6L542 350V357L524.6 360.4Z" fill="#8a8a8a"/><path d="M527 340L534 343L536 350L526 351Z" fill="#e2e2e2" stroke-width="0.4"/><ellipse cx="538" cy="338.6" rx="2.6" ry="4" fill="#3a3a3a"/><ellipse cx="524.6" cy="339.6" rx="2" ry="3.4" fill="#8a8a8a" stroke="#111"/></g>
<!-- NOx sensors -->
<path d="M644.8 391V421" stroke="#444" stroke-width="0.9" fill="none"/>
<g id="nox">
<rect x="633.6" y="343" width="23" height="40.4" rx="2" fill="#d2d2d2" stroke="#3a3a3a" stroke-width="0.8"/>
<rect x="635" y="344.6" width="18.8" height="19" rx="1.4" fill="#3a3a3a"/>
<rect x="635.6" y="365.4" width="17.6" height="17" rx="1.4" fill="#4c4c4c"/>
<rect x="638.6" y="350" width="10.6" height="8" fill="#5a5a5a"/>
<path d="M640.6 350.6V357.4M643.2 350.6V357.4M645.8 350.6V357.4" stroke="#2e2e2e" stroke-width="0.9"/>
<path d="M636.2 382.4H653L646.6 399.6H644Z" fill="#444"/>
<path d="M634.6 384L633.8 390Q634.4 392 636.6 391.4L637.6 385.6Z" fill="#c9c9c9" stroke="#444" stroke-width="0.5"/>
<rect x="651" y="333.8" width="4.2" height="10" rx="1.8" fill="#e8e8e8" stroke="#444" stroke-width="0.6"/>
<rect x="641.4" y="331" width="8" height="13" rx="1.2" fill="#555"/>
</g>
<use href="#nox" transform="translate(241 0)"/>
<path d="M885.8 391V410.4" stroke="#444" stroke-width="0.9"/>
<!-- urea injector -->
<g stroke="#444" stroke-width="0.7"><path d="M654 400.4L660 396.6L665.4 404.6L658.8 408.6Z" fill="#f4f4f4"/><path d="M658.6 407.6L664.2 404.4L667.4 413.2L663.8 415.2Z" fill="#dedede"/><path d="M665.2 414L668.4 421" fill="none" stroke-width="1.2"/></g>
<!-- connection dots -->
<g fill="#0a0a0a">
<ellipse cx="253.4" cy="472.2" rx="2.4" ry="4"/>
<ellipse cx="384.8" cy="509.5" rx="2.6" ry="3.6"/>
<ellipse cx="487" cy="543" rx="2.6" ry="3.6"/>
<ellipse cx="591.8" cy="519.5" rx="2.6" ry="3.6"/>
<ellipse cx="710.4" cy="509.7" rx="2.6" ry="3.6"/>
<ellipse cx="798.6" cy="542.6" rx="2.6" ry="3.6"/>
<ellipse cx="591.8" cy="406.2" rx="2.6" ry="3.8"/>
<ellipse cx="531.2" cy="335" rx="3.1" ry="4.2"/>
<ellipse cx="645.1" cy="333" rx="2.9" ry="3.8"/>
<ellipse cx="886" cy="333" rx="2.9" ry="3.8"/>
<ellipse cx="497.6" cy="385" rx="2.6" ry="3.4" stroke="#fff" stroke-width="0.9"/>
<ellipse cx="561" cy="385" rx="2.6" ry="3.4" stroke="#fff" stroke-width="0.9"/>
</g>

<!-- ball labels (vertically stretched like the artwork) -->
<g fill="#f4f8fc" font-size="19.6">
<text x="454.3" y="416.3" textLength="17.9" lengthAdjust="spacingAndGlyphs">CO</text>
<text x="454.3" y="472.4" textLength="17.2" lengthAdjust="spacingAndGlyphs">HC</text>
<text x="532.7" y="443.2" textLength="17.7" lengthAdjust="spacingAndGlyphs" fill="#eaf2f9">PM</text>
</g>
<g fill="#d4e8f7" font-size="19.6">
<text x="767.2" y="440" textLength="16.1" lengthAdjust="spacingAndGlyphs">NO</text>
<text x="783.6" y="444.2" font-size="11.4" textLength="5" lengthAdjust="spacingAndGlyphs">X</text>
<text x="944.7" y="409.4" font-size="18.4" textLength="8.2" lengthAdjust="spacingAndGlyphs">N</text>
<text x="952.9" y="413.8" font-size="11.6" textLength="4.1" lengthAdjust="spacingAndGlyphs">2</text>
<text x="940.2" y="470.8" font-size="18.4" textLength="7.5" lengthAdjust="spacingAndGlyphs">H</text>
<text x="947.7" y="475.8" font-size="11.6" textLength="3.7" lengthAdjust="spacingAndGlyphs">2</text>
<text x="951.7" y="470.8" font-size="18.4" textLength="9.9" lengthAdjust="spacingAndGlyphs">O</text>
</g>
<g fill="#0a0a0a" font-size="24.6">
<text x="442" y="511.4" textLength="33" lengthAdjust="spacingAndGlyphs">DOC</text>
<text x="527.2" y="511.4" textLength="29" lengthAdjust="spacingAndGlyphs">DPF</text>
<text x="752.6" y="510.2" textLength="31.6" lengthAdjust="spacingAndGlyphs">SCR</text>
<text x="806.2" y="510.2" textLength="33.3" lengthAdjust="spacingAndGlyphs">AOC</text>
</g>

<clipPath id="cp0"><rect x="478.9" y="146.9" width="103.1" height="152"/></clipPath>
<g clip-path="url(#cp0)"><g transform="translate(554.9 222.9)"><use href="#gbase"/><use href="#tkM"/>
<text x="-43.4" y="15.6" font-size="7" fill="#f0f0f0" text-anchor="middle" textLength="3.8" lengthAdjust="spacingAndGlyphs">0</text>
<text x="-0.9" y="-46.8" font-size="7" fill="#f0f0f0" text-anchor="middle" textLength="8" lengthAdjust="spacingAndGlyphs">50</text>
<use href="#needle" transform="rotate(204)"/><use href="#ghub"/>
<text x="-35.5" y="31.8" font-size="7.6" fill="#e6e6e6" textLength="16.7" lengthAdjust="spacingAndGlyphs">mbar</text>
<g stroke="#fff" stroke-width="1.25" fill="none" stroke-linecap="square" transform="translate(-35.2 38.6) skewX(-12)"><use href="#d2" x="0.0"/><use href="#d0" x="12.4"/></g>
</g></g>
<clipPath id="cp1"><rect x="202.89999999999998" y="566.9" width="103.3" height="152"/></clipPath>
<g clip-path="url(#cp1)"><g transform="translate(278.9 642.9)"><use href="#gbase"/><use href="#tkR"/>
<text x="-43.2" y="15.6" font-size="7" fill="#f0f0f0" text-anchor="middle" textLength="3.8" lengthAdjust="spacingAndGlyphs">0</text>
<text x="-29.1" y="-37" font-size="7" fill="#f0f0f0" text-anchor="middle" textLength="15" lengthAdjust="spacingAndGlyphs">1000</text>
<text x="-0.2" y="-47" font-size="7" fill="#f0f0f0" text-anchor="middle" textLength="15.4" lengthAdjust="spacingAndGlyphs">1500</text>
<text x="28.3" y="-37" font-size="7" fill="#f0f0f0" text-anchor="middle" textLength="15" lengthAdjust="spacingAndGlyphs">2000</text>
<use href="#needle" transform="rotate(197)"/><use href="#ghub"/>
<text x="-33.8" y="31.8" font-size="7.6" fill="#e6e6e6" textLength="13.3" lengthAdjust="spacingAndGlyphs">rpm</text>
<g stroke="#fff" stroke-width="1.25" fill="none" stroke-linecap="square" transform="translate(-35.5 38.6) skewX(-12)"><use href="#d2" x="0.0"/><use href="#d8" x="12.4"/></g>
</g></g>
<clipPath id="cp2"><rect x="323.3" y="566.9" width="102.7" height="152"/></clipPath>
<g clip-path="url(#cp2)"><g transform="translate(399.3 642.9)"><use href="#gbase"/><use href="#tkT"/>
<text x="-43.4" y="15.6" font-size="7" fill="#f0f0f0" text-anchor="middle" textLength="3.8" lengthAdjust="spacingAndGlyphs">0</text>
<text x="-39.6" y="-26.4" font-size="7" fill="#f0f0f0" text-anchor="middle" textLength="12.6" lengthAdjust="spacingAndGlyphs">200</text>
<text x="-0.8" y="-47" font-size="7" fill="#f0f0f0" text-anchor="middle" textLength="12.4" lengthAdjust="spacingAndGlyphs">400</text>
<use href="#needle" transform="rotate(181)"/><use href="#ghub"/>
<text x="-30" y="31.8" font-size="7.6" fill="#e6e6e6" textLength="7" lengthAdjust="spacingAndGlyphs">°C</text>
<g stroke="#fff" stroke-width="1.25" fill="none" stroke-linecap="square" transform="translate(-35.9 38.6) skewX(-12)"><use href="#d6" x="0.0"/><use href="#d7" x="12.4"/></g>
</g></g>
<clipPath id="cp3"><rect x="432.7" y="566.9" width="103.3" height="152"/></clipPath>
<g clip-path="url(#cp3)"><g transform="translate(508.7 642.9)"><use href="#gbase"/><use href="#tkT"/>
<text x="-43.4" y="15.6" font-size="7" fill="#f0f0f0" text-anchor="middle" textLength="3.8" lengthAdjust="spacingAndGlyphs">0</text>
<text x="-39.6" y="-26.4" font-size="7" fill="#f0f0f0" text-anchor="middle" textLength="12.6" lengthAdjust="spacingAndGlyphs">200</text>
<text x="-0.8" y="-47" font-size="7" fill="#f0f0f0" text-anchor="middle" textLength="12.4" lengthAdjust="spacingAndGlyphs">400</text>
<use href="#needle" transform="rotate(266.2)"/><use href="#ghub"/>
<text x="-30" y="31.8" font-size="7.6" fill="#e6e6e6" textLength="7" lengthAdjust="spacingAndGlyphs">°C</text>
<g stroke="#fff" stroke-width="1.25" fill="none" stroke-linecap="square" transform="translate(-41.2 38.6) skewX(-12)"><use href="#d3" x="0.0"/><use href="#d8" x="12.4"/><use href="#d6" x="24.8"/></g>
</g></g>
<clipPath id="cp4"><rect x="540.7" y="566.9" width="103.3" height="152"/></clipPath>
<g clip-path="url(#cp4)"><g transform="translate(616.7 642.9)"><use href="#gbase"/><use href="#tkT"/>
<text x="-43.4" y="15.6" font-size="7" fill="#f0f0f0" text-anchor="middle" textLength="3.8" lengthAdjust="spacingAndGlyphs">0</text>
<text x="-39.6" y="-26.4" font-size="7" fill="#f0f0f0" text-anchor="middle" textLength="12.6" lengthAdjust="spacingAndGlyphs">200</text>
<text x="-0.8" y="-47" font-size="7" fill="#f0f0f0" text-anchor="middle" textLength="12.4" lengthAdjust="spacingAndGlyphs">400</text>
<use href="#needle" transform="rotate(243.8)"/><use href="#ghub"/>
<text x="-30" y="31.8" font-size="7.6" fill="#e6e6e6" textLength="7" lengthAdjust="spacingAndGlyphs">°C</text>
<g stroke="#fff" stroke-width="1.25" fill="none" stroke-linecap="square" transform="translate(-41.2 38.6) skewX(-12)"><use href="#d3" x="0.0"/><use href="#d0" x="12.4"/><use href="#d3" x="24.8"/></g>
</g></g>
<clipPath id="cp5"><rect x="650.9" y="566.9" width="103.1" height="152"/></clipPath>
<g clip-path="url(#cp5)"><g transform="translate(726.9 642.9)"><use href="#gbase"/><use href="#tkT"/>
<text x="-43.4" y="15.6" font-size="7" fill="#f0f0f0" text-anchor="middle" textLength="3.8" lengthAdjust="spacingAndGlyphs">0</text>
<text x="-39.6" y="-26.4" font-size="7" fill="#f0f0f0" text-anchor="middle" textLength="12.6" lengthAdjust="spacingAndGlyphs">200</text>
<text x="-0.8" y="-47" font-size="7" fill="#f0f0f0" text-anchor="middle" textLength="12.4" lengthAdjust="spacingAndGlyphs">400</text>
<use href="#needle" transform="rotate(353.7)"/><use href="#ghub"/>
<text x="-30" y="31.8" font-size="7.6" fill="#e6e6e6" textLength="7" lengthAdjust="spacingAndGlyphs">°C</text>
<g stroke="#fff" stroke-width="1.25" fill="none" stroke-linecap="square" transform="translate(-41.2 38.6) skewX(-12)"><use href="#d7" x="0.0"/><use href="#d1" x="12.4"/><use href="#d0" x="24.8"/></g>
</g></g>
<clipPath id="cp6"><rect x="759.2" y="566.9" width="102.4" height="152"/></clipPath>
<g clip-path="url(#cp6)"><g transform="translate(835.2 642.9)"><use href="#gbase"/><use href="#tkT"/>
<text x="-43.4" y="15.6" font-size="7" fill="#f0f0f0" text-anchor="middle" textLength="3.8" lengthAdjust="spacingAndGlyphs">0</text>
<text x="-39.6" y="-26.4" font-size="7" fill="#f0f0f0" text-anchor="middle" textLength="12.6" lengthAdjust="spacingAndGlyphs">200</text>
<text x="-0.8" y="-47" font-size="7" fill="#f0f0f0" text-anchor="middle" textLength="12.4" lengthAdjust="spacingAndGlyphs">400</text>
<use href="#needle" transform="rotate(251.9)"/><use href="#ghub"/>
<text x="-30" y="31.8" font-size="7.6" fill="#e6e6e6" textLength="7" lengthAdjust="spacingAndGlyphs">°C</text>
<g stroke="#fff" stroke-width="1.25" fill="none" stroke-linecap="square" transform="translate(-41.2 38.6) skewX(-12)"><use href="#d3" x="0.0"/><use href="#d3" x="12.4"/><use href="#d3" x="24.8"/></g>
</g></g>
<g stroke="#111" stroke-width="2" fill="none" stroke-dasharray="6 2.6">
<path d="M253.4 569.6V476"/>
<path d="M384.8 570V513.4"/>
<path d="M487 569.4V547"/>
<path d="M591.8 570V523.4"/>
<path d="M710.4 570V513.6"/>
<path d="M798.6 570V546.6"/>
<path d="M591.8 402V166H615"/>
<path d="M645.4 327V274.4H712"/>
<path d="M886 327V311"/>
<path d="M531.4 297V327"/>
</g>
</svg>
<!--DIAGRAM-END-->
<!-- table -->
<div class="abs" style="left:192px;top:147px;width:267px;height:165px;border:1px solid #b4b4b4;background:#fff"></div>
<div class="abs" style="left:193px;top:178px;width:265px;height:1px;background:#c4c4c4"></div>
<div class="abs" style="left:193px;top:211px;width:265px;height:1px;background:#c4c4c4"></div>
<div class="abs" style="left:193px;top:244px;width:265px;height:1px;background:#c4c4c4"></div>
<div class="abs" style="left:193px;top:277px;width:265px;height:1px;background:#c4c4c4"></div>
<!-- info boxes -->
<div class="abs" style="left:615px;top:146px;width:214px;height:44px;border:1px solid #c4c4c4;background:#fff"></div>
<div class="abs" style="left:736px;top:149px;width:59px;height:38px;border:1px solid #c4c4c4;background:#fff"></div>
<div class="abs" style="left:712px;top:219px;width:117px;height:91px;border:1px solid #c4c4c4;background:#fff"></div>
<div class="abs" style="left:715px;top:270px;width:56px;height:37px;border:1px solid #c4c4c4;background:#fff"></div>
<div class="abs" style="left:835px;top:220px;width:117px;height:91px;border:1px solid #c4c4c4;background:#fff"></div>
<div class="abs" style="left:838px;top:271px;width:56px;height:37px;border:1px solid #c4c4c4;background:#fff"></div>
<svg id="mainsvg" width="844" height="651" viewBox="180 90 844 651" style="left:180px;top:90px" font-family="Liberation Sans, sans-serif">
<!-- title oil can -->
<use href="#oil" transform="translate(182.4 -134.6)"/>
<text x="225.2" y="116.6" font-size="10.8" font-weight="bold" fill="#3a3a3a" textLength="666.6" lengthAdjust="spacingAndGlyphs" >MAINTENANCE \ DIESEL PARTICULATE FILTER \ PARTICULATE FILTER REGENERATION \ Exhaust gases aftertreatment system</text>
<g fill="#4a4a4a" font-size="8.2">
<text x="196.4" y="166" font-size="8.2" font-weight="normal" fill="#4a4a4a" textLength="158" lengthAdjust="spacingAndGlyphs" >PARTICULATE FILTER REGENERATION, STATE</text><text x="197" y="198.8" font-size="8.2" font-weight="normal" fill="#4a4a4a" textLength="94.6" lengthAdjust="spacingAndGlyphs" >REGENERATION, NORMAL</text><text x="197" y="231.8" font-size="8.2" font-weight="normal" fill="#4a4a4a" textLength="89" lengthAdjust="spacingAndGlyphs" >FORCED REGENERATION</text><text x="197" y="264.8" font-size="8.2" font-weight="normal" fill="#4a4a4a" textLength="109.6" lengthAdjust="spacingAndGlyphs" >REGENERATION INTERRUPTED</text><text x="197" y="297.8" font-size="8.2" font-weight="normal" fill="#4a4a4a" textLength="13.8" lengthAdjust="spacingAndGlyphs" >N/A</text>
</g>
<g fill="#c6c6c6" stroke="#e4e4e4" stroke-width="1.3"><circle cx="445.4" cy="195.4" r="6.4" fill="#fff"/><circle cx="445.4" cy="228.4" r="6.4" fill="#fff"/><circle cx="445.4" cy="261.4" r="6.4" fill="#fff"/></g>
<g fill="#c4c4c4"><circle cx="445.4" cy="195.4" r="4.4"/><circle cx="445.4" cy="228.4" r="4.4"/><circle cx="445.4" cy="261.4" r="4.4"/></g>
<circle cx="445.4" cy="294.4" r="6.4" fill="#fff" stroke="#e9b64a" stroke-width="1.4"/><circle cx="445.4" cy="294.4" r="4.4" fill="#e29c00"/>
<!-- info text -->
<text x="618.6" y="166" font-size="8.2" font-weight="normal" fill="#4a4a4a" textLength="87.4" lengthAdjust="spacingAndGlyphs" >SOOT CONTENT ON THE</text><text x="618.6" y="177.2" font-size="8.2" font-weight="normal" fill="#4a4a4a" textLength="73.6" lengthAdjust="spacingAndGlyphs" >PARTICULATE FILTER</text><text x="749.4" y="170.8" font-size="9.6" font-weight="bold" fill="#3a3a3a" textLength="33" lengthAdjust="spacingAndGlyphs" >1 - LOW</text><text x="715.4" y="233" font-size="8.2" font-weight="normal" fill="#4a4a4a" textLength="113.4" lengthAdjust="spacingAndGlyphs" >NOX NITROGEN OXIDE SENSOR</text><text x="715.4" y="244.2" font-size="8.2" font-weight="normal" fill="#4a4a4a" textLength="99.6" lengthAdjust="spacingAndGlyphs" >BEFORE THE SCR CATALYTIC</text><text x="715.4" y="255.4" font-size="8.2" font-weight="normal" fill="#4a4a4a" textLength="65.4" lengthAdjust="spacingAndGlyphs" >CONVERTER, PPM</text><text x="734.6" y="291.8" font-size="9.6" font-weight="bold" fill="#3a3a3a" textLength="15.6" lengthAdjust="spacingAndGlyphs" >915</text><text x="776.6" y="292" font-size="9.6" font-weight="normal" fill="#4a4a4a" textLength="19.4" lengthAdjust="spacingAndGlyphs" >ppm</text><text x="838.4" y="233.8" font-size="8.2" font-weight="normal" fill="#4a4a4a" textLength="113.4" lengthAdjust="spacingAndGlyphs" >NOX NITROGEN OXIDE SENSOR</text><text x="838.4" y="245" font-size="8.2" font-weight="normal" fill="#4a4a4a" textLength="93.4" lengthAdjust="spacingAndGlyphs" >AFTER THE SCR CATALYTIC</text><text x="838.4" y="256.2" font-size="8.2" font-weight="normal" fill="#4a4a4a" textLength="65.4" lengthAdjust="spacingAndGlyphs" >CONVERTER, PPM</text><text x="857.6" y="292.6" font-size="9.6" font-weight="bold" fill="#3a3a3a" textLength="15.6" lengthAdjust="spacingAndGlyphs" >265</text><text x="899.6" y="292.8" font-size="9.6" font-weight="normal" fill="#4a4a4a" textLength="19.4" lengthAdjust="spacingAndGlyphs" >ppm</text>
<!-- right toolbar -->
<g stroke="#c8c8c8" fill="none">
<path d="M994.6 157.4L999.6 161.8L1010.6 152.6" stroke-width="3"/>
<path d="M994.6 194.4L1010.6 210M1010.6 194.4L994.6 210" stroke-width="3.2"/>
<path d="M999.2 242.4Q999.4 239.6 1002.8 239.6Q1006.4 239.6 1006.4 242.6Q1006.4 244.4 1004.6 245.6Q1003 246.8 1003 249.2" stroke-width="3"/>
<path d="M992.9 282.8V301.2H1012.2" stroke-width="1.4"/>
<path d="M995.4 298.2L998.6 292.4L1001.6 294.8L1004.2 288L1007.4 284.6L1010 288L1012.2 282.8" stroke-width="1.3"/>
</g>
<circle cx="1003" cy="254.6" r="1.9" fill="#c8c8c8"/>
<rect x="994.4" y="327" width="16" height="20.6" rx="1.2" fill="#c8c8c8"/>
<path d="M997 332H998.6M1000 332H1008M997 336H998.6M1000 336H1008M997 340H998.6M1000 340H1008M997 344H998.6M1000 344H1008" stroke="#fff" stroke-width="1.3"/>
<g fill="#c8c8c8"><rect x="994" y="379.4" width="11" height="13.6" rx="0.8"/><rect x="997" y="377.4" width="5" height="3"/><path d="M1006 380H1008.2V391H1006Z" opacity="0.7"/><ellipse cx="1007.6" cy="374.4" rx="4.8" ry="3.2"/><path d="M1004.6 376.4L1003.6 379.4L1007 377.2Z"/></g>
<path d="M995.6 383.6H1003.4M995.6 386.4H1003.4M995.6 389.2H1003.4" stroke="#fff" stroke-width="0.9"/>
<ellipse cx="1007.6" cy="374.4" rx="3" ry="1.6" fill="#fff" opacity="0.6"/>
<text x="997.6" y="436.2" font-family="Liberation Serif, serif" font-style="italic" font-weight="bold" font-size="29" fill="#c8c8c8" textLength="9" lengthAdjust="spacingAndGlyphs">i</text>
<path d="M995.8 463.6L1009.6 472.6L995.8 481.6Z" fill="#e29c00"/>
</svg>
<!-- STATUS -->
<div id="status"></div>
<div class="abs" style="left:135px;top:741px;width:66px;height:25px;background:#3a3a3a"></div>
<svg width="1024" height="27" viewBox="0 741 1024 27" style="left:0;top:741px" font-family="Liberation Sans, sans-serif">
<text x="35.6" y="757.8" font-size="11.1" font-weight="normal" fill="#fbe7bb" textLength="47.2" lengthAdjust="spacingAndGlyphs" >25.2.1.1.6</text><text x="112.4" y="757.8" font-size="11.1" font-weight="bold" fill="#fff" textLength="17.4" lengthAdjust="spacingAndGlyphs" >Exp</text><text x="138.8" y="757.8" font-size="11.1" font-weight="bold" fill="#fff" textLength="58.2" lengthAdjust="spacingAndGlyphs" >Simulation</text><text x="757.2" y="757.8" font-size="11.1" font-weight="normal" fill="#fdf3dc" textLength="100.8" lengthAdjust="spacingAndGlyphs" >Days of licence: 125</text><text x="990" y="757.8" font-size="11.1" font-weight="normal" fill="#fdf3dc" textLength="25" lengthAdjust="spacingAndGlyphs" >11:01</text>
<rect x="877.6" y="747.6" width="17.8" height="11.4" rx="1.6" fill="none" stroke="#fdf3dc" stroke-width="1.3"/>
<path d="M887.8 749.6L884.2 754H886.6L885.2 757.4L889 752.8H886.8Z" fill="#fdf3dc"/>
<g stroke="#fff" fill="none" stroke-linecap="round"><path d="M906.4 752.4Q913.4 746 920.4 752.4" stroke-width="2"/><path d="M909 755.2Q913.4 751.2 917.8 755.2" stroke-width="1.9"/></g>
<path d="M911.2 757.8Q913.4 755.8 915.6 757.8L913.4 760.4Z" fill="#fff"/>
<circle cx="937.4" cy="749" r="2.7" fill="none" stroke="#fdf3dc" stroke-width="1"/><path d="M939.4 751L942 753.8" stroke="#fdf3dc" stroke-width="1.1"/>
<text x="934.6" y="760.4" font-size="4.6" font-weight="bold" fill="#fff" textLength="9.4" lengthAdjust="spacingAndGlyphs" >75%</text>
<rect x="960.2" y="749.4" width="15.4" height="13.4" rx="1" fill="none" stroke="#fdf0d2" stroke-width="1.5"/>
<rect x="960.2" y="749.4" width="15.4" height="3.2" fill="#fdf0d2"/>
<path d="M963.8 747.2V751M971.8 747.2V751" stroke="#fdf0d2" stroke-width="1.6"/>
<path d="M965.2 753V762.4M970.4 753V762.4M960.6 756.2H975.4M960.6 759.4H975.4" stroke="#fdf0d2" stroke-width="1.1"/>
</svg>
</body>
</html>
